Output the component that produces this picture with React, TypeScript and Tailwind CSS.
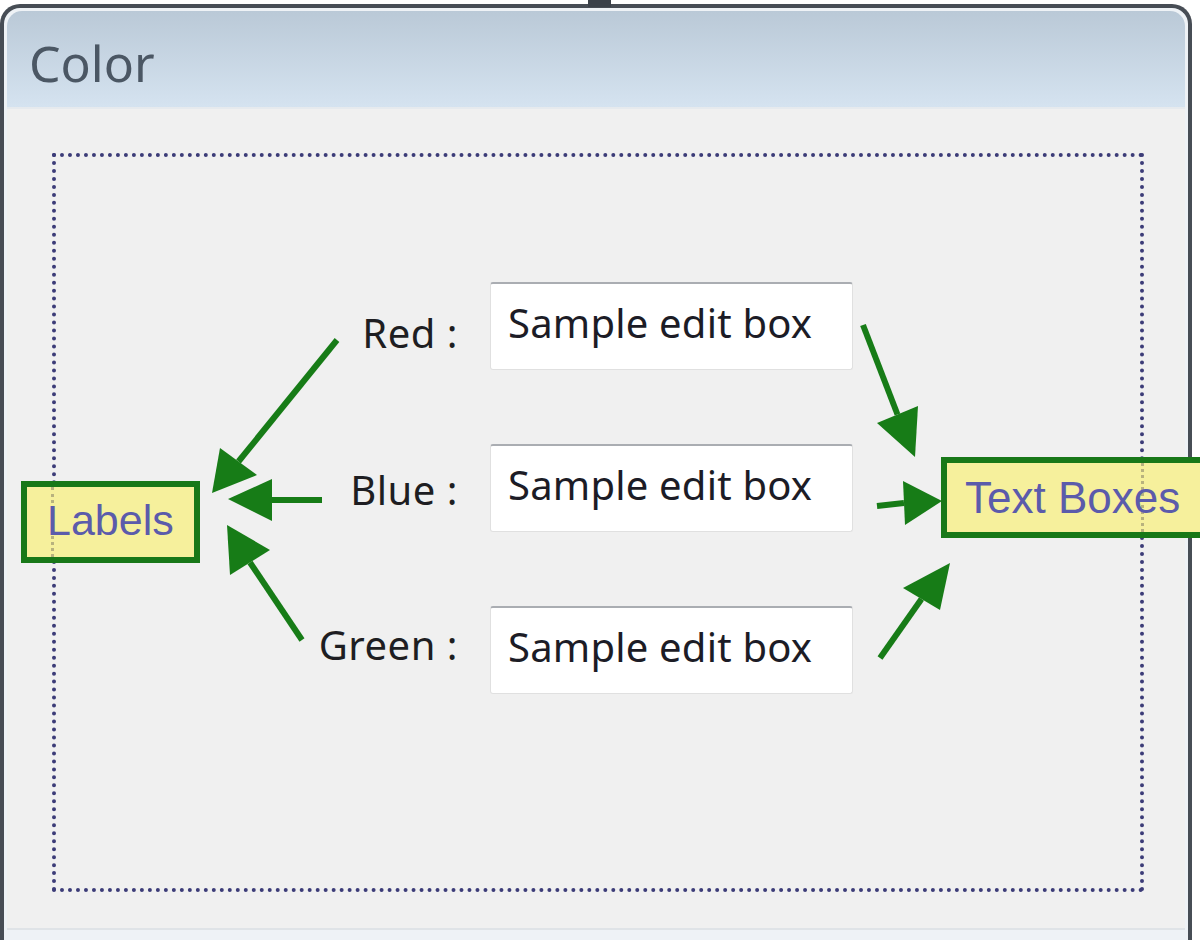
type Pt = [number, number];

type ArrowProps = {
  from: Pt;
  tip: Pt;
  a: Pt;
  b: Pt;
};

function Arrow({ from, tip, a, b }: ArrowProps) {
  const mid: Pt = [(a[0] + b[0]) / 2, (a[1] + b[1]) / 2];
  return (
    <g>
      <line x1={from[0]} y1={from[1]} x2={mid[0]} y2={mid[1]} stroke="#177c17" strokeWidth={6} />
      <polygon points={`${tip[0]},${tip[1]} ${a[0]},${a[1]} ${b[0]},${b[1]}`} fill="#177c17" />
    </g>
  );
}

const rows = [
  { label: 'Red :', offset: 'mt-[14px]' },
  { label: 'Blue :', offset: 'mt-[4px]' },
  { label: 'Green :', offset: 'mt-[-10px]' },
];

export default function App() {
  return (
    <div className="relative w-[1200px] h-[940px] overflow-hidden bg-white font-['Noto_Sans',sans-serif]">
      {/* window frame */}
      <div className="w-[1192px] h-[980px] mt-[4px] rounded-t-[20px] border-[4px] border-b-0 border-[#474d55] bg-[#eef2f6] p-[3px]">
        <div className="h-full rounded-t-[15px] overflow-hidden flex flex-col">
          <div className="h-[96px] bg-gradient-to-b from-[#bac9d7] to-[#d5e3f0] pl-[22px] pt-[27px] shrink-0">
            <h1 className="text-[50px] leading-[50px] text-[#4b5764]">Color</h1>
          </div>
          <div className="h-[823px] bg-[#f0f0f0] border-t-[2px] border-t-[#e6eaee] border-b-[2px] border-b-[#dfe3e7] pl-[45px] pt-[44px] shrink-0">
            <div className="w-[1092px] h-[739px] border-[4px] border-dotted border-[#3c3c78] pt-[125px] flex flex-col gap-[74px]">
              {rows.map((row) => (
                <div key={row.label} className="flex items-center gap-[32px]">
                  <span className={`w-[402px] text-right text-[40px] leading-none tracking-[0.5px] text-[#1e1e22] ${row.offset}`}>
                    {row.label}
                  </span>
                  <div className="w-[363px] h-[88px] bg-white rounded-[3px] border border-[#e0e0e0] border-t-[2px] border-t-[#aaadb2] flex items-center pl-[17px] pb-[8px]">
                    <span className="text-[40px] leading-none tracking-[0.2px] text-[#1c1c26]">Sample edit box</span>
                  </div>
                </div>
              ))}
            </div>
          </div>
        </div>
      </div>

      {/* notch at top */}
      <div className="absolute left-[588px] top-0 w-[23px] h-[7px] bg-[#3b4149]" />

      {/* annotation callouts */}
      <div className="absolute left-[21px] top-[481px] w-[179px] h-[82px] border-[6px] border-[#187818] bg-[#f6f09c] flex items-center pl-[20px] pb-[4px] font-['Liberation_Sans',sans-serif]">
        <div className="absolute left-[24px] top-0 bottom-0 border-l-[3px] border-dotted border-[#b8b27e]" />
        <span className="relative text-[43px] leading-none text-[#5b5bab]">Labels</span>
      </div>
      <div className="absolute left-[941px] top-[457px] w-[300px] h-[81px] border-[6px] border-[#187818] bg-[#f6f09c] flex items-center pl-[18px] font-['Liberation_Sans',sans-serif]">
        <div className="absolute left-[194px] top-0 bottom-0 border-l-[3px] border-dotted border-[#b8b27e]" />
        <span className="relative text-[44px] leading-none text-[#5b5bab]">Text Boxes</span>
      </div>

      {/* arrows */}
      <svg className="absolute inset-0 pointer-events-none" width={1200} height={940}>
        <Arrow from={[337, 340]} tip={[212, 493]} a={[220, 448]} b={[257, 475]} />
        <Arrow from={[322, 500]} tip={[228, 499]} a={[272, 479]} b={[272, 521]} />
        <Arrow from={[302, 640]} tip={[227, 525]} a={[230, 575]} b={[270, 550]} />
        <Arrow from={[863, 325]} tip={[915, 457]} a={[877, 423]} b={[918, 406]} />
        <Arrow from={[877, 506]} tip={[942, 501]} a={[903, 481]} b={[905, 525]} />
        <Arrow from={[880, 658]} tip={[950, 563]} a={[903, 588]} b={[940, 610]} />
      </svg>
    </div>
  );
}
